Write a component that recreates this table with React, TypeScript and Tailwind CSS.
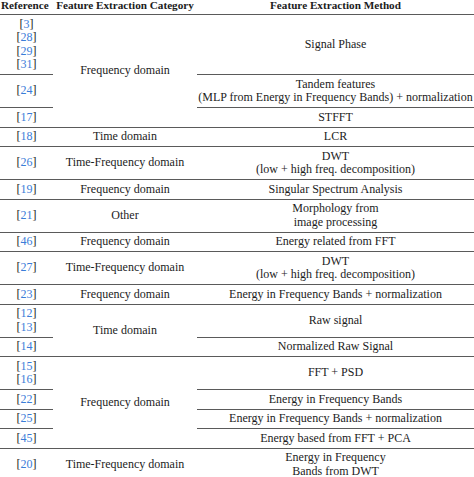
type Row = {
  refs: string[];
  method: string[];
  category?: { label: string; span: number };
  last?: boolean;
};

const rows: Row[] = [
  { refs: ['3', '28', '29', '31'], method: ['Signal Phase'], category: { label: 'Frequency domain', span: 3 } },
  { refs: ['24'], method: ['Tandem features', '(MLP from Energy in Frequency Bands) + normalization'] },
  { refs: ['17'], method: ['STFFT'] },
  { refs: ['18'], method: ['LCR'], category: { label: 'Time domain', span: 1 } },
  { refs: ['26'], method: ['DWT', '(low + high freq. decomposition)'], category: { label: 'Time-Frequency domain', span: 1 } },
  { refs: ['19'], method: ['Singular Spectrum Analysis'], category: { label: 'Frequency domain', span: 1 } },
  { refs: ['21'], method: ['Morphology from', 'image processing'], category: { label: 'Other', span: 1 } },
  { refs: ['46'], method: ['Energy related from FFT'], category: { label: 'Frequency domain', span: 1 } },
  { refs: ['27'], method: ['DWT', '(low + high freq. decomposition)'], category: { label: 'Time-Frequency domain', span: 1 } },
  { refs: ['23'], method: ['Energy in Frequency Bands + normalization'], category: { label: 'Frequency domain', span: 1 } },
  { refs: ['12', '13'], method: ['Raw signal'], category: { label: 'Time domain', span: 2 } },
  { refs: ['14'], method: ['Normalized Raw Signal'] },
  { refs: ['15', '16'], method: ['FFT + PSD'], category: { label: 'Frequency domain', span: 4 } },
  { refs: ['22'], method: ['Energy in Frequency Bands'] },
  { refs: ['25'], method: ['Energy in Frequency Bands + normalization'] },
  { refs: ['45'], method: ['Energy based from FFT + PCA'] },
  { refs: ['20'], method: ['Energy in Frequency', 'Bands from DWT'], category: { label: 'Time-Frequency domain', span: 1 }, last: true },
];

export default function App() {
  return (
    <div
      className="w-[474px] h-[477px] overflow-hidden bg-white text-[#1c1c1c]"
      style={{ fontFamily: '"Liberation Serif", "Times New Roman", serif' }}
    >
      <table className="table-fixed border-collapse w-[474px] text-[12px] leading-[13.5px]">
        <colgroup>
          <col className="w-[53px]" />
          <col className="w-[144px]" />
          <col className="w-[277px]" />
        </colgroup>
        <thead>
          <tr className="text-[11.2px] leading-[10px] font-bold">
            <th className="pb-[4px] pl-px text-left whitespace-nowrap border-b border-[#5a5a5a]">Reference</th>
            <th className="pb-[4px] text-center whitespace-nowrap border-b border-[#5a5a5a]">Feature Extraction Category</th>
            <th className="pb-[4px] text-center whitespace-nowrap border-b border-[#5a5a5a]">Feature Extraction Method</th>
          </tr>
        </thead>
        <tbody>
          {rows.map((row, i) => {
            const line = row.last ? '' : 'border-b border-[#5a5a5a]';
            return (
              <tr key={i}>
                <td className={`py-[2.5px] text-center align-middle ${line}`}>
                  {row.refs.map((r) => (
                    <div key={r}>
                      [<span className="text-[#3b7dd8]">{r}</span>]
                    </div>
                  ))}
                </td>
                {row.category && (
                  <td
                    rowSpan={row.category.span}
                    className={`py-[2.5px] text-center align-middle whitespace-nowrap ${line}`}
                  >
                    {row.category.label}
                  </td>
                )}
                <td className={`py-[2.5px] text-center align-middle whitespace-nowrap ${line}`}>
                  {row.method.map((m) => (
                    <div key={m}>{m}</div>
                  ))}
                </td>
              </tr>
            );
          })}
        </tbody>
      </table>
    </div>
  );
}
